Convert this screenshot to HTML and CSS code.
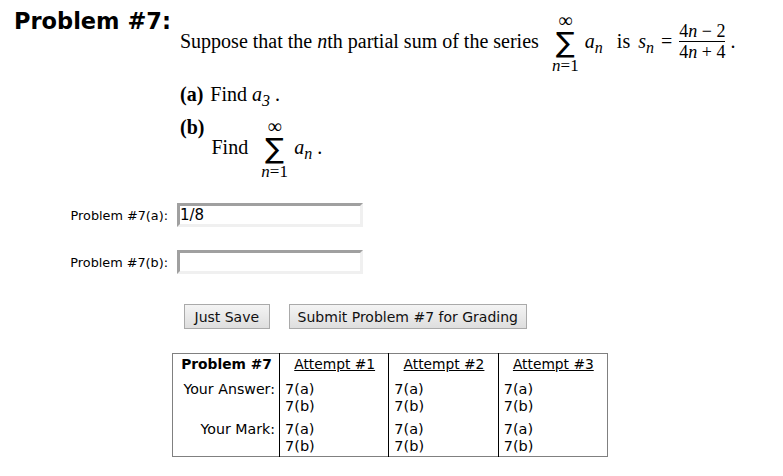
FILE: index.html
```html
<!DOCTYPE html>
<html lang="en">
<head>
  <meta charset="UTF-8" />
  <title>Problem #7</title>
  <link rel="stylesheet" href="styles.css">
</head>
<body>

  <div class="top">
    <h1>Problem #7:</h1>
    <div class="problem">
      <div class="line">
        <span>Suppose that the <i>n</i>th partial sum of the series</span>
        <span class="sum"><span class="lim inf">∞</span><span class="sigma">∑</span><span class="lim"><i>n</i>=1</span></span>
        <span class="term"><i>a<sub>n</sub></i></span>
        <span class="is">is</span>
        <span class="term sn"><i>s<sub>n</sub></i></span>
        <span class="eq">=</span>
        <span class="frac"><span class="num">4<i>n</i> − 2</span><span class="den">4<i>n</i> + 4</span></span>
        <span class="dot">.</span>
      </div>
      <div class="part part-a"><b>(a)</b><span>Find <i>a<sub>3</sub></i> .</span></div>
      <div class="part part-b">
        <b>(b)</b>
        <div class="find">
          <span>Find</span>
          <span class="sum"><span class="lim inf">∞</span><span class="sigma">∑</span><span class="lim"><i>n</i>=1</span></span>
          <span class="term"><i>a<sub>n</sub></i> .</span>
        </div>
      </div>
    </div>
  </div>

  <form class="answers">
    <label class="row"><span class="label">Problem #7(a):</span><input type="text" value="1/8"></label>
    <label class="row"><span class="label">Problem #7(b):</span><input type="text"></label>
    <div class="buttons">
      <button type="button" class="save">Just Save</button>
      <button type="button">Submit Problem #7 for Grading</button>
    </div>
  </form>

  <table class="attempts">
    <tr>
      <th>Problem #7</th>
      <td class="head"><u>Attempt #1</u></td>
      <td class="head"><u>Attempt #2</u></td>
      <td class="head"><u>Attempt #3</u></td>
    </tr>
    <tr>
      <td class="name">Your Answer:</td>
      <td>7(a)<br>7(b)</td>
      <td>7(a)<br>7(b)</td>
      <td>7(a)<br>7(b)</td>
    </tr>
    <tr>
      <td class="name">Your Mark:</td>
      <td>7(a)<br>7(b)</td>
      <td>7(a)<br>7(b)</td>
      <td>7(a)<br>7(b)</td>
    </tr>
  </table>

</body>
</html>
```
FILE: styles.css
```css
body {
  margin: 0;
  padding: 8px 0 0 14px;
  font-family: "DejaVu Sans", Verdana, sans-serif;
  font-size: 13px;
  color: #000;
  background: #fff;
}

.top {
  display: flex;
}

h1 {
  width: 166px;
  margin: 0;
  font-size: 22.5px;
  line-height: 27px;
  white-space: nowrap;
}

.problem {
  font-family: "Liberation Serif", "Times New Roman", serif;
  font-size: 20px;
  margin-top: 2px;
}

.line {
  display: flex;
  align-items: center;
  height: 62px;
  white-space: nowrap;
}

sub {
  font-size: 16px;
  line-height: 0;
}

.sum {
  display: inline-flex;
  flex-direction: column;
  align-items: center;
  margin: 4px 6px 0 13px;
  width: 27px;
}

.lim {
  font-size: 17px;
  line-height: 17px;
}

.inf {
  font-size: 20px;
}

.sigma {
  font-family: "DejaVu Sans", sans-serif;
  font-size: 28px;
  line-height: 28px;
}

.is {
  margin: 0 8px 0 14px;
}

.eq {
  margin: 0 7px 0 7px;
}

.frac {
  display: inline-flex;
  flex-direction: column;
  text-align: center;
  font-size: 18px;
  line-height: 20px;
}

.num {
  border-bottom: 1px solid #000;
}

.dot {
  margin-left: 5px;
}

.part {
  display: flex;
  gap: 7px;
}

.part-a {
  margin-top: 10px;
  line-height: 24px;
}

.part-b {
  margin-top: 9px;
}

.part-b b {
  line-height: 24px;
}

.find {
  display: flex;
  align-items: center;
  margin-top: -1px;
}

.answers {
  margin-top: 23px;
}

.row {
  display: flex;
  align-items: center;
  gap: 9px;
  height: 24px;
  margin-bottom: 23px;
}

.label {
  width: 154px;
  text-align: right;
  font-size: 12.8px;
}

input {
  box-sizing: border-box;
  width: 186px;
  height: 24px;
  padding: 0;
  font-family: inherit;
  font-size: 15px;
  border: 3px solid #f0f0f0;
  border-top-color: #a0a0a0;
  border-left-color: #a0a0a0;
  outline: none;
}

.buttons {
  display: flex;
  gap: 19px;
  margin: 30px 0 0 170px;
}

button {
  height: 25px;
  padding: 0 8px;
  font-family: inherit;
  font-size: 14px;
  color: #111;
  border: 1px solid #aaa;
  background: linear-gradient(#f4f4f4, #dedede);
}

button.save {
  padding: 0 9.5px;
}

.attempts {
  border-collapse: collapse;
  border: 1px solid #808080;
  margin: 24px 0 0 158px;
  width: 436px;
  table-layout: fixed;
  font-size: 14.5px;
  line-height: 17px;
}

.attempts td, .attempts th {
  padding: 2px 4px 0 5px;
  vertical-align: top;
  border-left: 1px solid #000;
}

.attempts th, .attempts .name {
  width: 97px;
  border-left: 0;
  text-align: right;
}

.attempts th {
  text-align: center;
  font-size: 13.8px;
}

.attempts .name {
  font-size: 14.2px;
}

.attempts tr:nth-child(2) td {
  padding-top: 8px;
}

.attempts tr:nth-child(3) td {
  padding: 6px 4px 1px 5px;
}

.attempts .head {
  text-align: center;
  font-size: 13.8px;
}
```
